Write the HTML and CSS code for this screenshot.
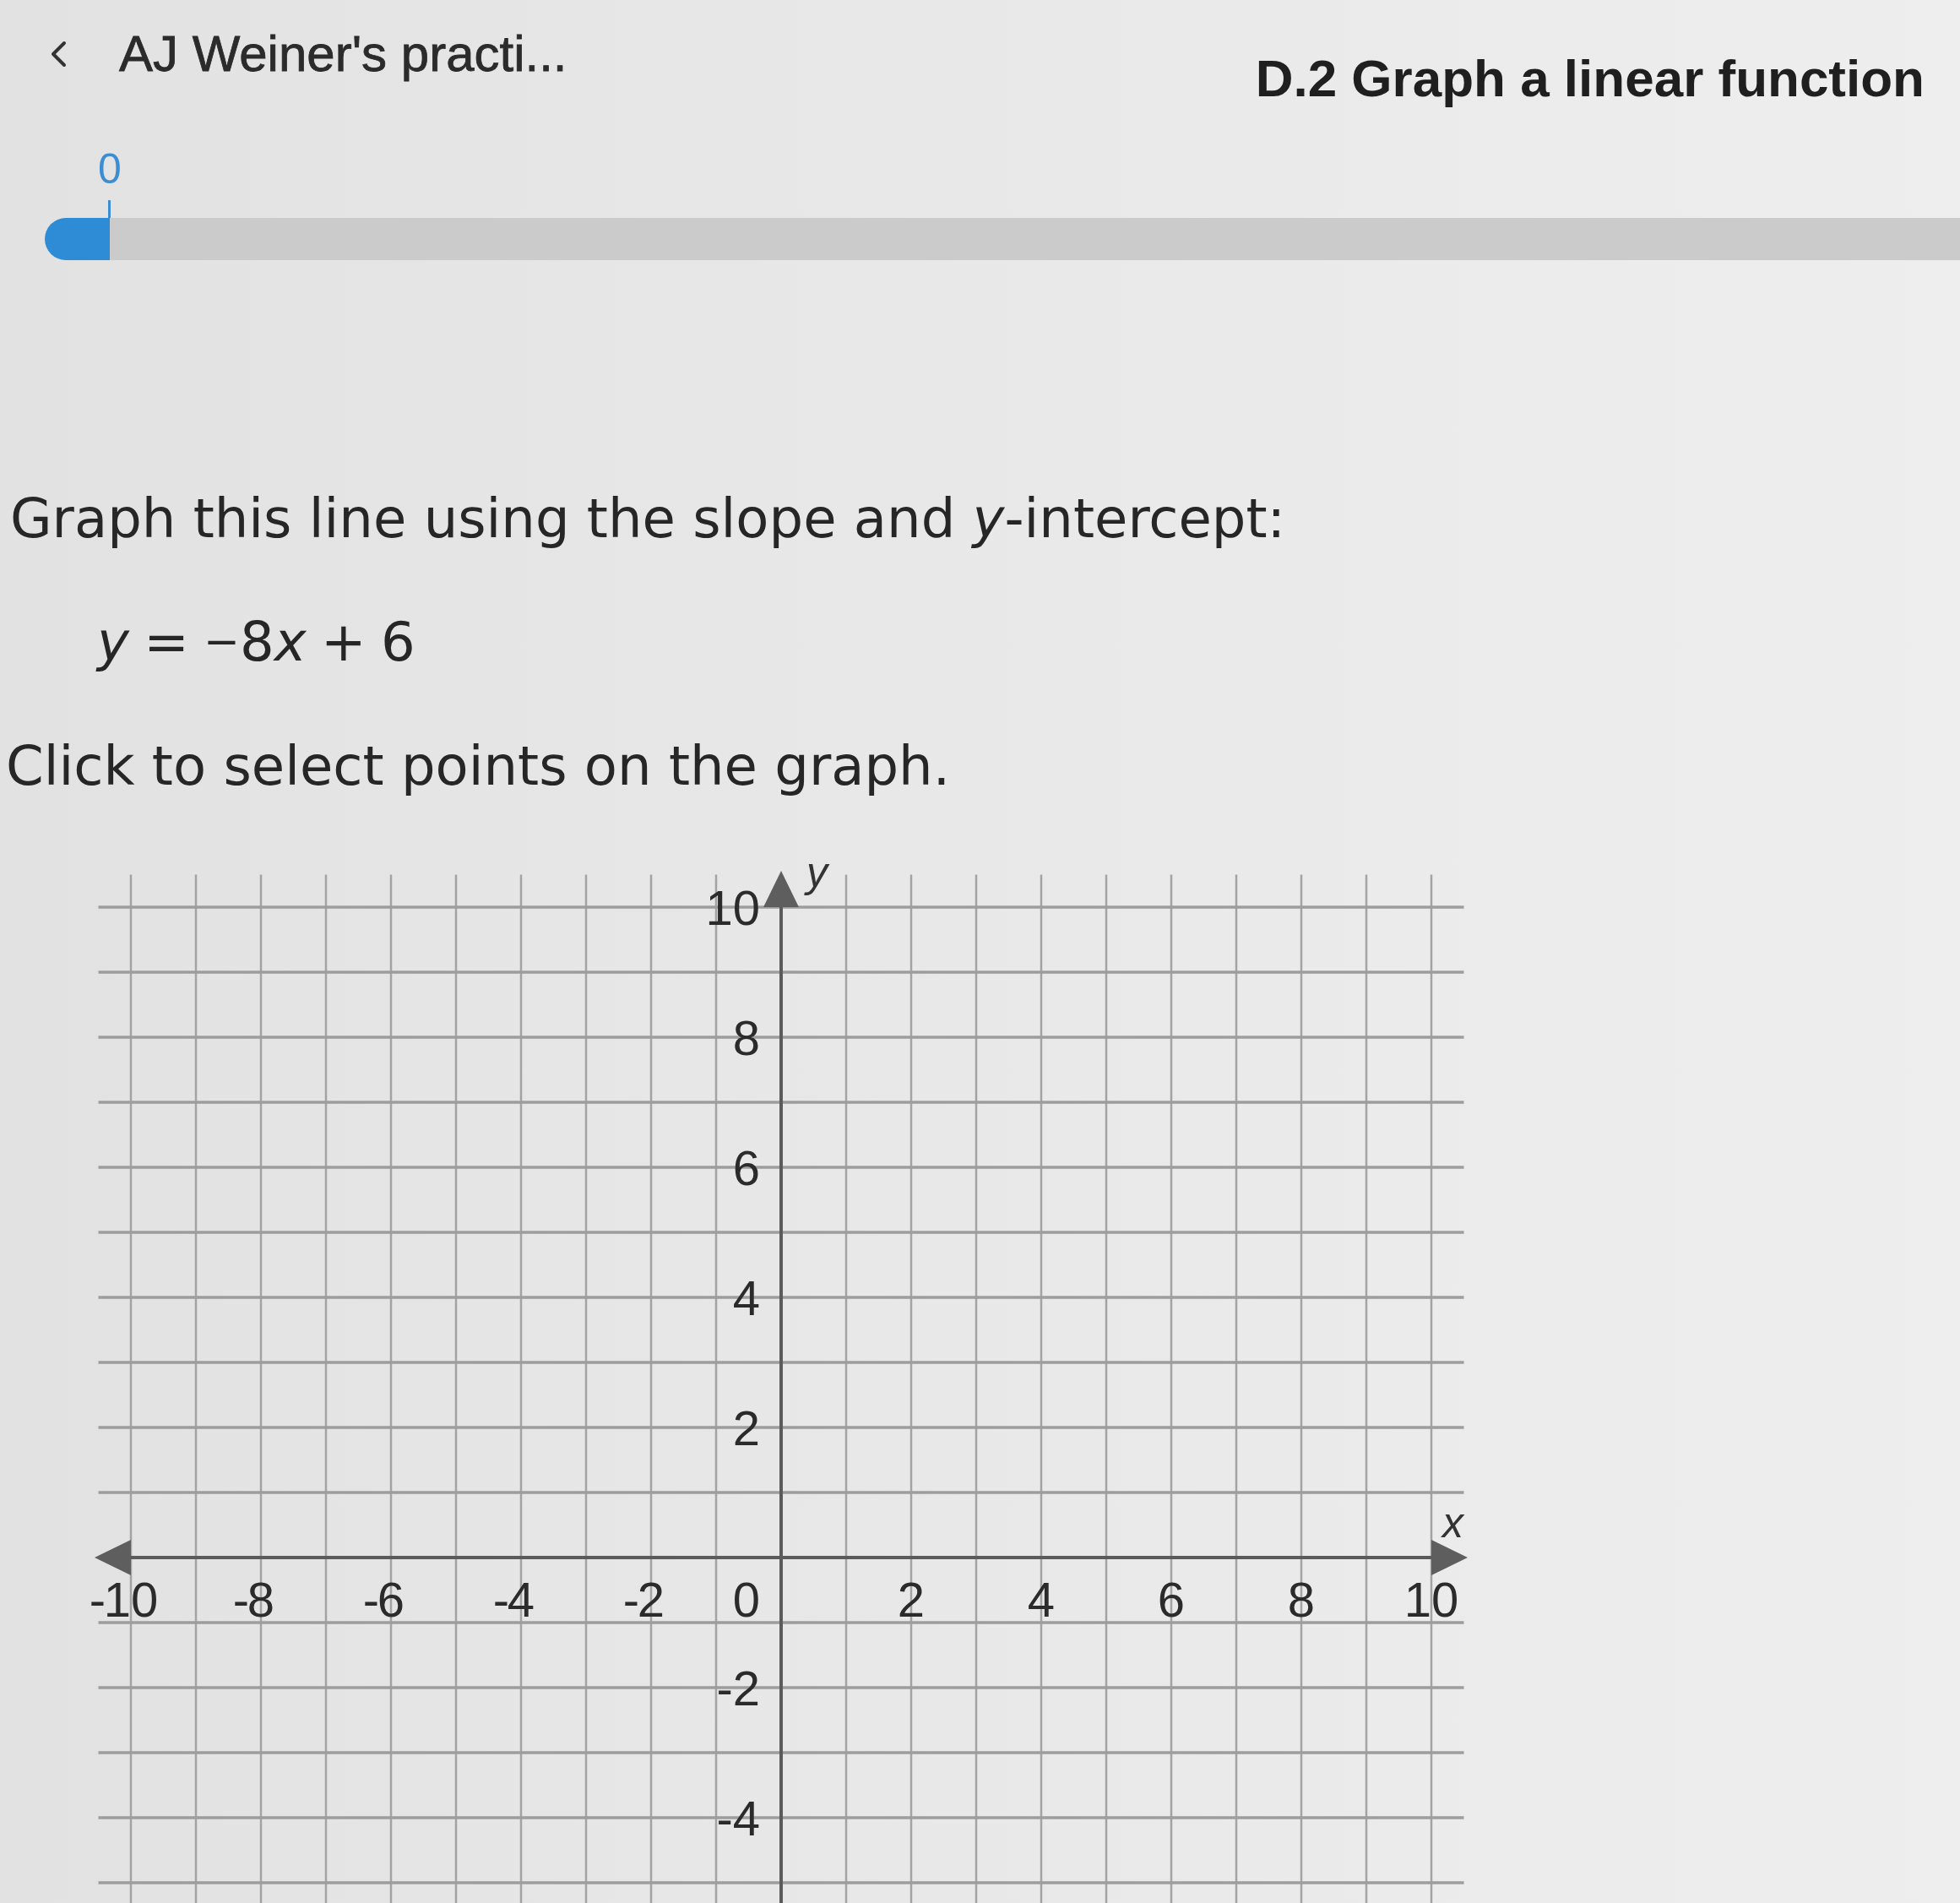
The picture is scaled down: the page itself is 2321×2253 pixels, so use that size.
FILE: index.html
```html
<!DOCTYPE html>
<html lang="en">
<head>
<meta charset="utf-8">
<title>D.2 Graph a linear function</title>
<link rel="stylesheet" href="styles.css">
</head>
<body>
<div class="page">
  <header class="topbar">
    <div class="back">
      <svg class="chevron" width="22" height="32" viewBox="0 0 22 32" aria-hidden="true">
        <path d="M18 3 L5 16 L18 29" fill="none" stroke="#333" stroke-width="4" stroke-linecap="round" stroke-linejoin="round"/>
      </svg>
      <span class="crumb">AJ Weiner's practi...</span>
    </div>
    <h1 class="title">D.2 Graph a linear function</h1>
  </header>

  <section class="progress">
    <div class="score">0</div>
    <div class="tick"></div>
    <div class="bar">
      <div class="bar-fill"></div>
      <div class="bar-track"></div>
    </div>
  </section>

  <section class="question">
    <p class="prompt">Graph this line using the slope and <i>y</i>-intercept:</p>
    <p class="equation"><i>y</i> = <span class="neg">−</span>8<i>x</i> + 6</p>
    <p class="prompt click">Click to select points on the graph.</p>
  </section>

  <svg class="graph" width="1800" height="1260" viewBox="0 0 1800 1260">
    <path class="grid-v" d="M155 37.5V1660M232 37.5V1660M309 37.5V1660M386 37.5V1660M463 37.5V1660M540 37.5V1660M617 37.5V1660M694 37.5V1660M771 37.5V1660M848 37.5V1660M1002 37.5V1660M1079 37.5V1660M1156 37.5V1660M1233 37.5V1660M1310 37.5V1660M1387 37.5V1660M1464 37.5V1660M1541 37.5V1660M1618 37.5V1660M1695 37.5V1660"/>
    <path class="grid-h" d="M116.5 76H1733.5M116.5 153H1733.5M116.5 230H1733.5M116.5 307H1733.5M116.5 384H1733.5M116.5 461H1733.5M116.5 538H1733.5M116.5 615H1733.5M116.5 692H1733.5M116.5 769H1733.5M116.5 923H1733.5M116.5 1000H1733.5M116.5 1077H1733.5M116.5 1154H1733.5M116.5 1231H1733.5M116.5 1308H1733.5M116.5 1385H1733.5M116.5 1462H1733.5M116.5 1539H1733.5M116.5 1616H1733.5"/>

    <line class="axis" x1="155" y1="846" x2="1695" y2="846"/>
    <line class="axis" x1="925" y1="76" x2="925" y2="1616"/>
    <polygon class="arrow" points="1695,825 1695,867 1738,846"/>
    <polygon class="arrow" points="155,825 155,867 112,846"/>
    <polygon class="arrow" points="904,76 946,76 925,33"/>

    <g class="tick-label">
      <text x="155" y="916" text-anchor="middle">10</text><text x="125" y="916" text-anchor="end">-</text>
      <text x="309" y="916" text-anchor="middle">8</text><text x="295" y="916" text-anchor="end">-</text>
      <text x="463" y="916" text-anchor="middle">6</text><text x="449" y="916" text-anchor="end">-</text>
      <text x="617" y="916" text-anchor="middle">4</text><text x="603" y="916" text-anchor="end">-</text>
      <text x="771" y="916" text-anchor="middle">2</text><text x="757" y="916" text-anchor="end">-</text>
      <text x="900" y="916" text-anchor="end">0</text>
      <text x="1079" y="916" text-anchor="middle">2</text>
      <text x="1233" y="916" text-anchor="middle">4</text>
      <text x="1387" y="916" text-anchor="middle">6</text>
      <text x="1541" y="916" text-anchor="middle">8</text>
      <text x="1695" y="916" text-anchor="middle">10</text>

      <text x="900" y="97" text-anchor="end">10</text>
      <text x="900" y="251" text-anchor="end">8</text>
      <text x="900" y="405" text-anchor="end">6</text>
      <text x="900" y="559" text-anchor="end">4</text>
      <text x="900" y="713" text-anchor="end">2</text>
      <text x="900" y="1021" text-anchor="end">-2</text>
      <text x="900" y="1175" text-anchor="end">-4</text>
    </g>
    <text class="axis-name" x="955" y="52">y</text>
    <text class="axis-name" x="1708" y="822">x</text>
  </svg>
</div>
</body>
</html>
```

FILE: styles.css
```css
html, body {
  margin: 0;
  padding: 0;
  overflow: hidden;
}

body {
  width: 2321px;
  height: 2253px;
  background: linear-gradient(90deg, #e2e2e2 0%, #e8e8e8 45%, #eeeeee 100%);
  color: #2a2a2a;
  font-family: "Liberation Sans", Arial, sans-serif;
}

.page {
  width: 2321px;
}

/* ---------- top bar ---------- */
.topbar {
  box-sizing: border-box;
  height: 175px;
  padding: 34px 42px 0 58px;
  display: flex;
  justify-content: space-between;
  align-items: flex-start;
}

.back {
  display: flex;
  align-items: center;
  gap: 61px;
}

.chevron {
  display: block;
}

.crumb {
  font-size: 60px;
  line-height: 60px;
  color: #2b2b2b;
  -webkit-text-stroke: 0.8px #2b2b2b;
}

.title {
  margin: 28px 0 0;
  font-size: 62px;
  line-height: 62px;
  font-weight: 700;
  color: #1f1f1f;
}

/* ---------- progress ---------- */
.score {
  margin-left: 116px;
  font-size: 50px;
  line-height: 50px;
  height: 50px;
  color: #3d8dd3;
}

.tick {
  margin: 12px 0 0 128px;
  width: 3px;
  height: 21px;
  background: #3d8dd3;
}

.bar {
  display: flex;
  height: 50px;
}

.bar-fill {
  margin-left: 53px;
  width: 77px;
  background: #2e8bd6;
  border-radius: 25px 0 0 25px;
}

.bar-track {
  flex: 1;
  background: #cbcbcb;
}

/* ---------- question ---------- */
.question {
  margin-top: 268px;
  padding-left: 12px;
  font-family: "DejaVu Sans", Verdana, sans-serif;
  font-size: 64px;
  line-height: 77px;
  color: #262626;
}

.question p {
  margin: 0;
}

.question .equation {
  margin-top: 69px;
  margin-left: 103px;
  word-spacing: -3px;
}

.question .click {
  margin-top: 66px;
  margin-left: -5px;
}

.neg {
  font-size: 0.8em;
  position: relative;
  top: -0.1em;
}

/* ---------- graph ---------- */
.graph {
  display: block;
  margin-top: 52px;
}

.grid-v {
  fill: none;
  stroke: #a3a3a3;
  stroke-width: 2.5;
}

.grid-h {
  fill: none;
  stroke: #9d9d9d;
  stroke-width: 3.5;
}

.axis {
  stroke: #5b5b5b;
  stroke-width: 4;
}

.arrow {
  fill: #5e5e5e;
}

.tick-label {
  font-family: "Liberation Sans", Arial, sans-serif;
  font-size: 58px;
  fill: #2b2b2b;
}

.axis-name {
  font-family: "Liberation Sans", Arial, sans-serif;
  font-style: italic;
  font-size: 50px;
  fill: #333333;
}
```
